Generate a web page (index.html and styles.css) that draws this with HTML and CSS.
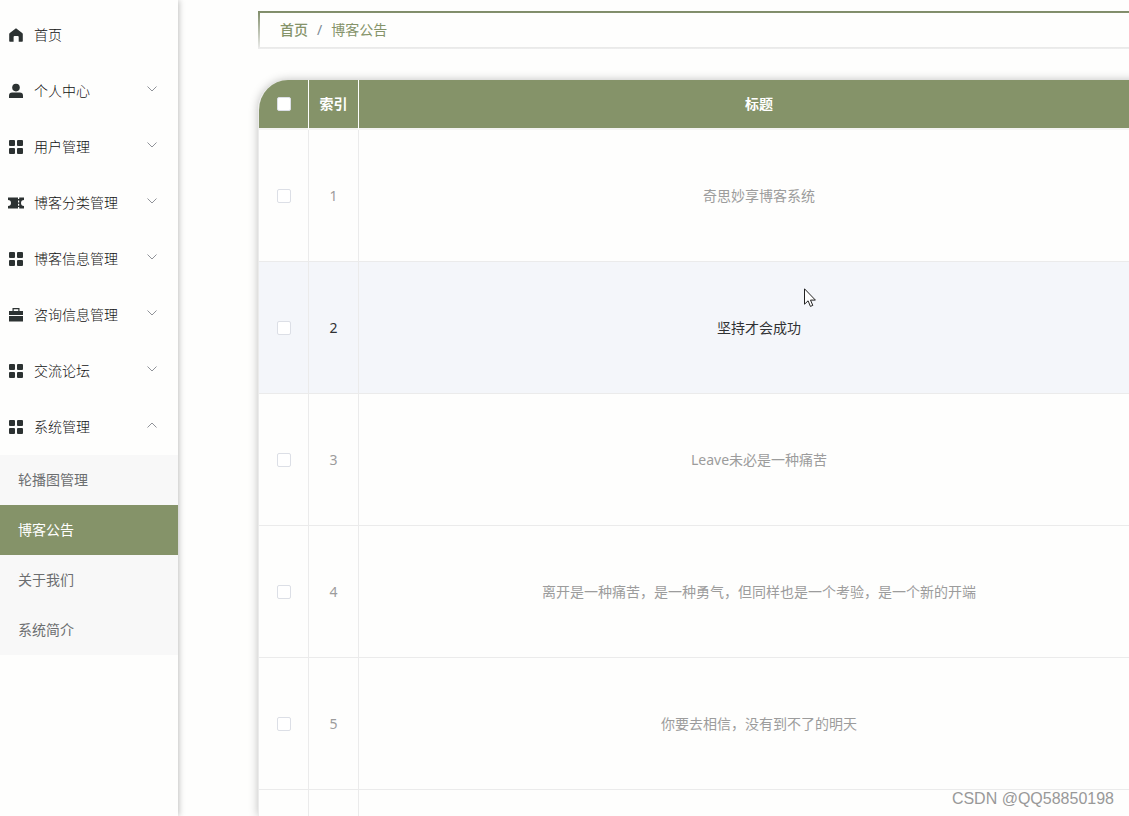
FILE: index.html
```
<!DOCTYPE html>
<html lang="zh-CN">
<head>
  <meta charset="UTF-8">
  <meta name="viewport" content="width=device-width, initial-scale=1.0">
  <title>博客公告</title>
  <link rel="stylesheet" href="styles.css">
</head>
<body>
  <svg class="sprite" width="0" height="0" aria-hidden="true">
    <symbol id="icon-home" viewBox="0 0 16 16"><path d="M8 1.2 14.2 6a1.5 1.5 0 0 1 .6 1.2V14a.7.7 0 0 1-.7.7h-3.4V10a1 1 0 0 0-1-1H6.600a1 1 0 0 0-1 1v4.700H1.900a.7.7 0 0 1-.7-.7V7.200A1.500 1.500 0 0 1 1.800 6z"/></symbol>
    <symbol id="icon-user" viewBox="0 0 16 16"><circle cx="8" cy="4.600" r="3.800"/><path d="M1 15v-2.200A3.200 3.200 0 0 1 4.200 9.600h7.600a3.200 3.200 0 0 1 3.200 3.200V15z"/></symbol>
    <symbol id="icon-menu" viewBox="0 0 16 16"><rect x="1" y="1" width="6" height="6" rx="1"/><rect x="9" y="1" width="6" height="6" rx="1"/><rect x="1" y="9" width="6" height="6" rx="1"/><rect x="9" y="9" width="6" height="6" rx="1"/></symbol>
    <symbol id="icon-ticket" viewBox="0 0 16 16"><path d="M0 2.500h10v1.500h1.200V2.500H16v2.500a3 3 0 0 0 0 6v2.500h-4.800v-1.500H10v1.500H0v-2.500a3 3 0 0 0 0-6zM10 5.500v2h1.200v-2zm0 3.200v2h1.200v-2z" fill-rule="evenodd"/></symbol>
    <symbol id="icon-case" viewBox="0 0 16 16"><path d="M4.500 4V1h7v3H15v4H1V4zm1.200 0h4.600V2.200H5.700zM1 9h14v5.500H1z" fill-rule="evenodd"/></symbol>
    <symbol id="icon-down" viewBox="0 0 12 12"><path d="m1.500 3.500 4.500 4.500 4.500-4.500" fill="none" stroke="currentColor"/></symbol>
    <symbol id="icon-up" viewBox="0 0 12 12"><path d="m1.500 8.500 4.500-4.500 4.500 4.500" fill="none" stroke="currentColor"/></symbol>
  </svg>

  <div class="layout">
    <nav class="sidebar">
      <ul class="menu">
        <li><a href="#"><svg class="icon"><use href="#icon-home"/></svg><span>首页</span></a></li>
        <li><a href="#"><svg class="icon"><use href="#icon-user"/></svg><span>个人中心</span><svg class="arrow"><use href="#icon-down"/></svg></a></li>
        <li><a href="#"><svg class="icon"><use href="#icon-menu"/></svg><span>用户管理</span><svg class="arrow"><use href="#icon-down"/></svg></a></li>
        <li><a href="#"><svg class="icon"><use href="#icon-ticket"/></svg><span>博客分类管理</span><svg class="arrow"><use href="#icon-down"/></svg></a></li>
        <li><a href="#"><svg class="icon"><use href="#icon-menu"/></svg><span>博客信息管理</span><svg class="arrow"><use href="#icon-down"/></svg></a></li>
        <li><a href="#"><svg class="icon"><use href="#icon-case"/></svg><span>咨询信息管理</span><svg class="arrow"><use href="#icon-down"/></svg></a></li>
        <li><a href="#"><svg class="icon"><use href="#icon-menu"/></svg><span>交流论坛</span><svg class="arrow"><use href="#icon-down"/></svg></a></li>
        <li><a href="#"><svg class="icon"><use href="#icon-menu"/></svg><span>系统管理</span><svg class="arrow"><use href="#icon-up"/></svg></a></li>
      </ul>
      <ul class="submenu">
        <li><a href="#">轮播图管理</a></li>
        <li><a href="#" class="active">博客公告</a></li>
        <li><a href="#">关于我们</a></li>
        <li><a href="#">系统简介</a></li>
      </ul>
    </nav>

    <main class="main">
      <div class="breadcrumb">
        <a href="#">首页</a>
        <span class="separator">/</span>
        <span>博客公告</span>
      </div>

      <div class="table-box">
        <table>
          <thead>
            <tr>
              <th class="col-small"><input type="checkbox" aria-label="全选"></th>
              <th class="col-small">索引</th>
              <th>标题</th>
            </tr>
          </thead>
          <tbody>
            <tr>
              <td><input type="checkbox" aria-label="选择 1"></td>
              <td>1</td>
              <td>奇思妙享博客系统</td>
            </tr>
            <tr class="hover">
              <td><input type="checkbox" aria-label="选择 2"></td>
              <td>2</td>
              <td>坚持才会成功</td>
            </tr>
            <tr>
              <td><input type="checkbox" aria-label="选择 3"></td>
              <td>3</td>
              <td>Leave未必是一种痛苦</td>
            </tr>
            <tr>
              <td><input type="checkbox" aria-label="选择 4"></td>
              <td>4</td>
              <td>离开是一种痛苦，是一种勇气，但同样也是一个考验，是一个新的开端</td>
            </tr>
            <tr>
              <td><input type="checkbox" aria-label="选择 5"></td>
              <td>5</td>
              <td>你要去相信，没有到不了的明天</td>
            </tr>
            <tr class="next">
              <td></td>
              <td></td>
              <td></td>
            </tr>
          </tbody>
        </table>
      </div>
    </main>
  </div>

  <svg class="cursor" viewBox="0 0 12 20" aria-hidden="true"><path d="M.5.8v15.400l3.600-3.400 2.300 5.600 2.400-1-2.300-5.300h4.900z" fill="#fff" stroke="#222"/></svg>
  <div class="watermark">CSDN @QQ58850198</div>
</body>
</html>
```
FILE: styles.css
```
* {
  box-sizing: border-box;
}
body {
  margin: 0;
  min-height: 100vh;
  overflow-x: hidden;
  position: relative;
  background: #fefefd;
  color: #303133;
  font-family: "Noto Sans", "Noto Sans CJK SC", sans-serif;
  font-size: 14px;
  line-height: 20px;
}
a {
  color: inherit;
  text-decoration: none;
}
ul {
  list-style: none;
  margin: 0;
  padding: 0;
}
.sprite {
  position: absolute;
}
.layout {
  display: flex;
  min-height: 100vh;
}

/* sidebar */
.sidebar {
  flex: 0 0 178px;
  padding-top: 7px;
  box-shadow: 1px 0 6px rgba(0, 0, 0, 0.25);
}
.menu {
  color: #111;
  font-weight: 300;
}
.menu a {
  display: flex;
  align-items: center;
  height: 56px;
  padding: 0 20px 0 8px;
}
.icon {
  width: 16px;
  height: 16px;
  margin-right: 10px;
  fill: #2c3232;
}
.arrow {
  width: 12px;
  height: 12px;
  margin-left: auto;
  margin-bottom: 4px;
  color: #909399;
}
.submenu {
  background: #f8f8f8;
  color: #6c6e70;
}
.submenu a {
  display: block;
  padding: 0 18px;
  line-height: 50px;
}
.submenu .active {
  background: #859369;
  color: #fff;
}

/* content */
.main {
  flex: 1;
  display: flex;
  flex-direction: column;
  min-width: 0;
  padding: 11px 0 0 80px;
}
.breadcrumb {
  display: flex;
  align-items: center;
  gap: 9px;
  height: 38px;
  margin-bottom: 31px;
  padding-left: 20px;
  border: 2px solid;
  border-right: 0;
  border-image: linear-gradient(#7f8c68, #eeeeee) 2;
  color: #859369;
}
.breadcrumb a {
  font-weight: 500;
}
.separator {
  color: #7c8a94;
}
.table-box {
  flex: 1;
  width: 100%;
  min-width: 902px;
  border-left: 1px solid #ebebeb;
  border-radius: 30px 0 0 0;
  overflow: hidden;
  box-shadow: 0 0 10px rgba(0, 0, 0, 0.25);
}
table {
  width: 100%;
  height: 100%;
  table-layout: fixed;
  border-collapse: separate;
  border-spacing: 0;
  text-align: center;
}
.col-small {
  width: 50px;
}
th {
  height: 50px;
  padding: 0;
  background: #859369;
  background-clip: padding-box;
  border-right: 1px solid #fefefd;
  border-bottom: 2px solid #f4f4f2;
  color: #fff;
  font-weight: 700;
}
td {
  height: 132px;
  padding: 0;
  background: #fefefd;
  border-right: 1px solid #ebebeb;
  border-bottom: 1px solid #ebebeb;
  color: #9c9c9c;
}
.hover td {
  background: #f4f6fa;
  color: #303133;
}
.next td {
  height: auto;
  border-bottom: 0;
}
input[type="checkbox"] {
  appearance: none;
  display: block;
  width: 14px;
  height: 14px;
  margin: 0 auto;
  border: 1px solid #dcdfe6;
  border-radius: 2px;
  background: #fff;
}

/* overlays */
.cursor {
  position: absolute;
  left: 804px;
  top: 288px;
  width: 12px;
  height: 20px;
}
.watermark {
  position: absolute;
  right: 15px;
  bottom: 7px;
  color: #999;
  font-family: "Liberation Sans", sans-serif;
  font-size: 16px;
}
```
